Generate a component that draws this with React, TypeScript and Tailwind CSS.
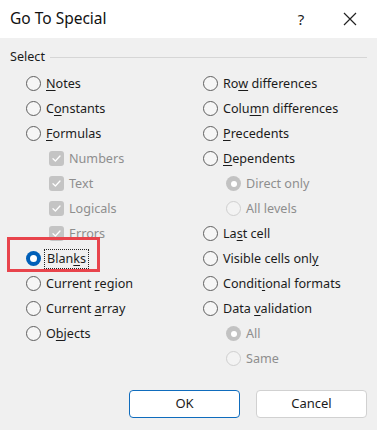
import React from "react";

type Opt = {
  label: string;
  u?: number; // index of underlined letter
  kind?: "radio" | "check";
  indent?: boolean;
  disabled?: boolean;
  checked?: boolean;
  focus?: boolean;
};

const left: Opt[] = [
  { label: "Notes", u: 0 },
  { label: "Constants", u: 1 },
  { label: "Formulas", u: 0 },
  { label: "Numbers", kind: "check", indent: true, disabled: true, checked: true },
  { label: "Text", kind: "check", indent: true, disabled: true, checked: true },
  { label: "Logicals", kind: "check", indent: true, disabled: true, checked: true },
  { label: "Errors", kind: "check", indent: true, disabled: true, checked: true },
  { label: "Blanks", u: 4, checked: true, focus: true },
  { label: "Current region", u: 8 },
  { label: "Current array", u: 8 },
  { label: "Objects", u: 1 },
];

const right: Opt[] = [
  { label: "Row differences", u: 2 },
  { label: "Column differences", u: 4 },
  { label: "Precedents", u: 0 },
  { label: "Dependents", u: 0 },
  { label: "Direct only", indent: true, disabled: true, checked: true },
  { label: "All levels", indent: true, disabled: true },
  { label: "Last cell", u: 2 },
  { label: "Visible cells only", u: 17 },
  { label: "Conditional formats", u: 6 },
  { label: "Data validation", u: 5 },
  { label: "All", indent: true, disabled: true, checked: true },
  { label: "Same", indent: true, disabled: true },
];

function Label({ text, u }: { text: string; u?: number }) {
  if (u === undefined || u >= text.length) return <>{text}</>;
  return (
    <>
      {text.slice(0, u)}
      <span className="underline underline-offset-2">{text[u]}</span>
      {text.slice(u + 1)}
    </>
  );
}

function Radio({ checked, disabled }: { checked?: boolean; disabled?: boolean }) {
  if (disabled && checked)
    return (
      <span className="w-[15px] h-[15px] rounded-full bg-[#c2c2c2] flex items-center justify-center shrink-0">
        <span className="w-[6px] h-[6px] rounded-full bg-white" />
      </span>
    );
  if (disabled)
    return <span className="w-[15px] h-[15px] rounded-full border border-[#cfcfcf] bg-[#f3f3f3] shrink-0" />;
  if (checked)
    return (
      <span className="w-[15px] h-[15px] rounded-full bg-[#005fb8] flex items-center justify-center shrink-0">
        <span className="w-[7px] h-[7px] rounded-full bg-white" />
      </span>
    );
  return <span className="w-[15px] h-[15px] rounded-full border border-[#5f5f5f] bg-[#f6f6f6] shrink-0" />;
}

function Check() {
  return (
    <span className="w-[15px] h-[15px] rounded-[3px] bg-[#c4c4c4] flex items-center justify-center shrink-0">
      <svg width="11" height="11" viewBox="0 0 11 11" fill="none">
        <path d="M2 5.8 L4.4 8 L9 3" stroke="white" strokeWidth="1.3" strokeLinecap="round" strokeLinejoin="round" />
      </svg>
    </span>
  );
}

function Row({ o }: { o: Opt }) {
  return (
    <div className={`relative h-[25px] flex items-center ${o.indent ? "pl-[23px]" : ""}`}>
      {o.kind === "check" ? <Check /> : <Radio checked={o.checked} disabled={o.disabled} />}
      <span
        className={`ml-[5px] leading-[16px] ${o.disabled ? "text-[#8e8e8e]" : "text-[#1b1b1b]"} ${
          o.focus ? "outline outline-1 outline-dotted outline-[#222] outline-offset-1 px-px" : ""
        }`}
      >
        <Label text={o.label} u={o.disabled ? undefined : o.u} />
      </span>
      {o.focus && (
        <span className="absolute left-[-19px] top-[-9px] w-[93px] h-[35px] border-[3px] border-[#e8444c] pointer-events-none" />
      )}
    </div>
  );
}

export default function App() {
  return (
    <div
      className="w-[377px] h-[430px] bg-[#f0f0f0] text-[12.6px] text-[#1b1b1b] overflow-hidden flex flex-col"
      style={{ fontFamily: '"Noto Sans", "Open Sans", sans-serif' }}
    >
      <div className="h-[38px] bg-white flex items-center px-[10px] shrink-0">
        <span className="text-[15.5px] text-[#111] flex-1">Go To Special</span>
        <span className="text-[15px] w-[30px] text-center mr-[27px]">?</span>
        <svg width="14" height="14" viewBox="0 0 14 14" className="mr-[10px]">
          <path d="M1 1 L13 13 M13 1 L1 13" stroke="#222" strokeWidth="1.2" />
        </svg>
      </div>

      <div className="flex items-center h-[24px] mt-[7px] px-[10px]">
        <span>Select</span>
        <span className="flex-1 h-px bg-[#d6d6d6] ml-[5px]" />
      </div>

      <div className="grid grid-cols-[177px_1fr] pl-[26px] mt-[2px]">
        <div className="flex flex-col">
          {left.map((o) => (
            <Row key={o.label} o={o} />
          ))}
        </div>
        <div className="flex flex-col">
          {right.map((o) => (
            <Row key={o.label} o={o} />
          ))}
        </div>
      </div>

      <div className="flex justify-end gap-[16px] pr-[10px] mt-[19px]">
        <button className="w-[111px] h-[28px] rounded-[4px] bg-white border border-[#0f6cbd] text-[13px]">OK</button>
        <button className="w-[111px] h-[28px] rounded-[4px] bg-white border border-[#d1d1d1] text-[13px]">Cancel</button>
      </div>
    </div>
  );
}
